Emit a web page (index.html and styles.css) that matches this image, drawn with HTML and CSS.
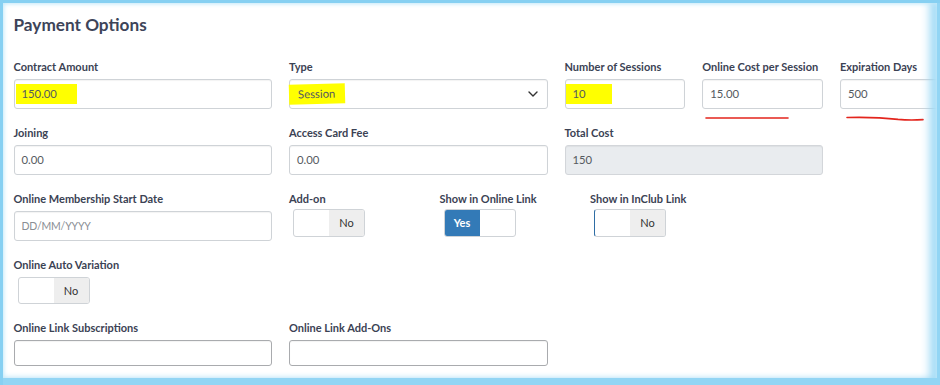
FILE: index.html
```html
<!DOCTYPE html>
<html lang="en">
<head>
<meta charset="utf-8">
<title>Payment Options</title>
<link rel="stylesheet" href="styles.css">
</head>
<body>
<div class="frame">
  <div class="content">
    <h2 class="title">Payment Options</h2>

    <div class="row row-first">
      <div class="field span2">
        <label class="lbl">Contract Amount</label>
        <div class="input"><span class="hl hl-amount">150.00</span></div>
      </div>
      <div class="field span2">
        <label class="lbl">Type</label>
        <div class="input select"><span class="hl hl-type">Session</span>
          <svg class="chev" width="10" height="6" viewBox="0 0 10 6"><path d="M1 1 L5 5 L9 1" fill="none" stroke="#333" stroke-width="1.4" stroke-linecap="round" stroke-linejoin="round"/></svg>
        </div>
      </div>
      <div class="field">
        <label class="lbl">Number of Sessions</label>
        <div class="input"><span class="hl hl-sessions">10</span></div>
      </div>
      <div class="field annotated">
        <label class="lbl">Online Cost per Session</label>
        <div class="input">15.00</div>
        <svg class="redline red1" width="84" height="4" viewBox="0 0 84 4"><path d="M1 2 L83 2" fill="none" stroke="#e3251d" stroke-width="1.6" stroke-linecap="round"/></svg>
      </div>
      <div class="field span2 annotated">
        <label class="lbl">Expiration Days</label>
        <div class="input">500</div>
        <svg class="redline red2" width="78" height="6" viewBox="0 0 78 6"><path d="M1 1.5 C 20 1, 40 2, 52 3.4 C 62 4.2, 70 4, 77 3.6" fill="none" stroke="#e3251d" stroke-width="1.6" stroke-linecap="round"/></svg>
      </div>
    </div>

    <div class="row">
      <div class="field span2">
        <label class="lbl">Joining</label>
        <div class="input">0.00</div>
      </div>
      <div class="field span2">
        <label class="lbl">Access Card Fee</label>
        <div class="input">0.00</div>
      </div>
      <div class="field span2">
        <label class="lbl">Total Cost</label>
        <div class="input disabled">150</div>
      </div>
    </div>

    <div class="row row-toggles">
      <div class="field">
        <label class="lbl">Online Membership Start Date</label>
        <div class="input placeholder">DD/MM/YYYY</div>
      </div>
      <div class="field">
        <label class="lbl">Add-on</label>
        <div class="toggle"><span class="t-empty"></span><span class="t-no">No</span></div>
      </div>
      <div class="field">
        <label class="lbl">Show in Online Link</label>
        <div class="toggle"><span class="t-yes">Yes</span><span class="t-empty"></span></div>
      </div>
      <div class="field">
        <label class="lbl">Show in InClub Link</label>
        <div class="toggle focused"><span class="t-empty"></span><span class="t-no">No</span></div>
      </div>
    </div>

    <div class="row">
      <div class="field span2">
        <label class="lbl">Online Auto Variation</label>
        <div class="toggle"><span class="t-empty"></span><span class="t-no">No</span></div>
      </div>
    </div>

    <div class="row">
      <div class="field span2">
        <label class="lbl">Online Link Subscriptions</label>
        <div class="input short"></div>
      </div>
      <div class="field span2">
        <label class="lbl">Online Link Add-Ons</label>
        <div class="input short"></div>
      </div>
    </div>
  </div>
</div>
</body>
</html>
```

FILE: styles.css
```css
html, body {
  margin: 0;
  padding: 0;
  background: #ffffff;
}

.frame {
  position: relative;
  width: 940px;
  height: 385px;
  overflow: hidden;
  background: #ffffff;
  font-family: Lato, "Open Sans", "Liberation Sans", sans-serif;
}

.frame::after {
  content: "";
  position: absolute;
  inset: 0;
  pointer-events: none;
  box-shadow:
    inset 3px 3px 0 0 #86d0f2,
    inset -3px -7px 0 0 #92d5f4,
    inset 0 0 4px 4px #c4e9f9,
    inset -14px 0 10px -4px #9ad8f5,
    inset 0 -11px 6px -4px #a9def6;
}

.content {
  padding: 15px 0 0 13.5px;
}

.title {
  margin: 0;
  font-size: 17.2px;
  line-height: 20px;
  font-weight: 700;
  color: #3d4459;
}

.row {
  display: grid;
  grid-template-columns: repeat(8, 120.75px);
  column-gap: 17px;
  margin-top: 17px;
  align-items: start;
}

.row-first {
  margin-top: 24.5px;
}

.row-toggles {
  grid-template-columns: 258.5px 133.5px 133.5px 133.5px;
  margin-top: 17px;
}

.span2 {
  grid-column: span 2;
}

.field {
  display: flex;
  flex-direction: column;
  position: relative;
}

.lbl {
  font-size: 11px;
  line-height: 14px;
  font-weight: 700;
  color: #3b4254;
  margin-bottom: 5px;
  white-space: nowrap;
}

.input {
  box-sizing: border-box;
  height: 30px;
  border: 1px solid #cfd3d7;
  border-radius: 3px;
  box-shadow: inset 0 1px 1px rgba(0, 0, 0, 0.05);
  padding: 0 7px;
  display: flex;
  align-items: center;
  font-size: 11.3px;
  color: #555a60;
  background: #ffffff;
  white-space: nowrap;
}

.input.short {
  height: 26px;
  border-color: #a9abae;
}

.input.disabled {
  background: #e9ecef;
  border-color: #d3d6da;
}

.input.placeholder {
  color: #8a8e94;
  font-size: 10.5px;
  letter-spacing: -0.2px;
}

.select {
  justify-content: space-between;
  padding-right: 9px;
}

.chev {
  display: block;
}

.hl {
  background: #ffff00;
  padding: 3px 0 4px;
}

.hl-amount {
  margin-left: -6px;
  padding-left: 6px;
  padding-right: 20px;
}

.hl-type {
  margin-left: -8px;
  padding-left: 9px;
  padding-right: 10px;
  padding-top: 4px;
  padding-bottom: 4px;
  transform: rotate(-1.5deg);
  display: inline-block;
  line-height: 12px;
}

.hl-sessions {
  margin-left: -7px;
  padding-left: 7px;
  padding-right: 26px;
}

.redline {
  position: absolute;
  display: block;
}

.red1 {
  left: 3px;
  top: 56px;
}

.red2 {
  left: 6px;
  top: 56px;
}

.toggle {
  box-sizing: border-box;
  display: flex;
  width: 72px;
  height: 27px;
  margin-left: 4px;
  border: 1px solid #cfd3d7;
  border-radius: 3px;
  overflow: hidden;
  background: #ffffff;
}

.row-toggles .field .toggle {
  margin-top: -2px;
  height: 28px;
}

.toggle span {
  flex: 1;
  display: flex;
  align-items: center;
  justify-content: center;
  font-size: 11px;
}

.t-no {
  background: #eeeeee;
  color: #333333;
}

.t-yes {
  background: #337ab7;
  color: #ffffff;
  font-weight: 700;
}

.toggle.focused {
  border-left-color: #2e6da4;
}
```
